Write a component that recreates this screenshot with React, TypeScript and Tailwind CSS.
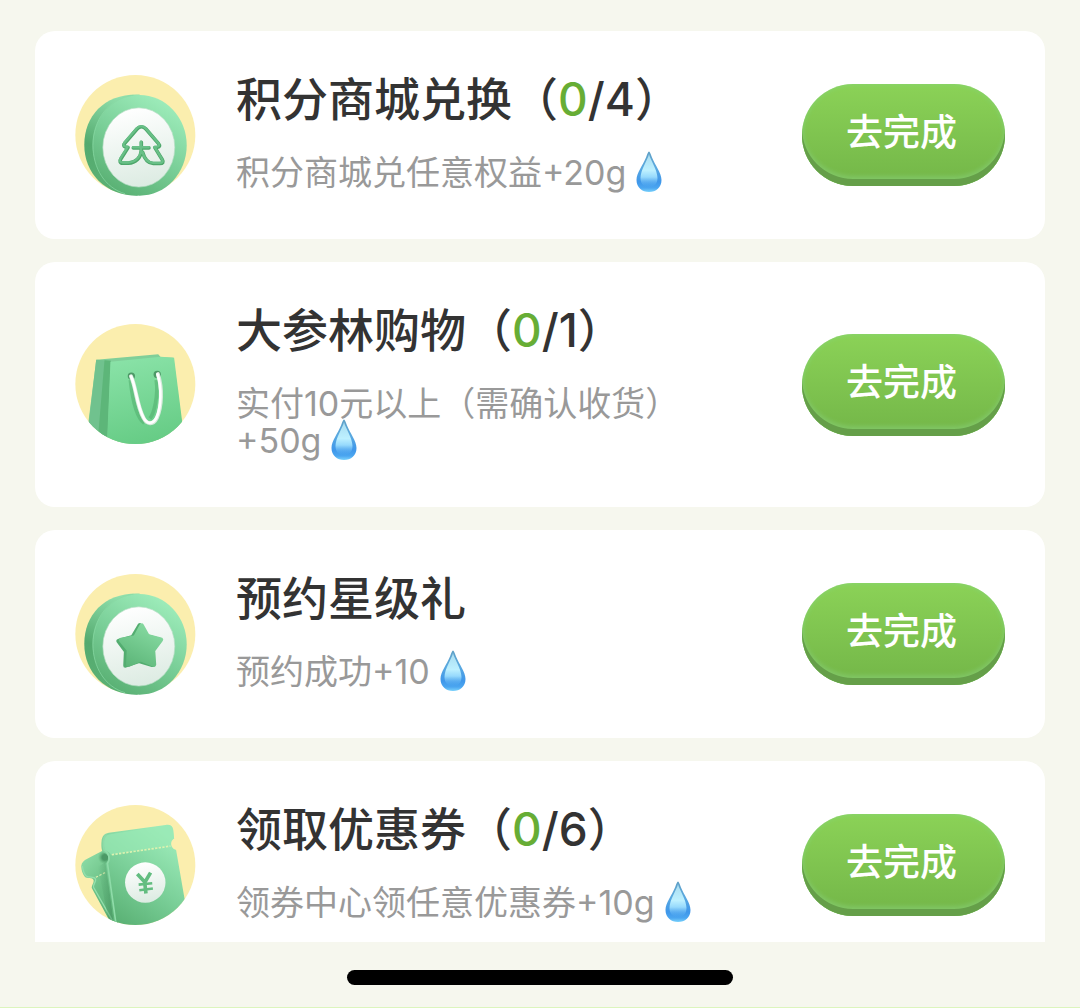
import type { ReactNode } from 'react'

type Task = {
  id: string
  title: string
  total?: number
  desc: string
  reward: string
  icon: ReactNode
}

function Drop() {
  return (
    <svg viewBox="0 0 26 42" className="inline-block w-[26px] h-[42px] ml-[10px] -mt-4 -mb-2 align-middle" aria-hidden="true">
      <defs>
        <linearGradient id="dropBody" x1="0" y1="0" x2="0" y2="1">
          <stop offset="0" stopColor="#5f9fc4" />
          <stop offset="0.4" stopColor="#5aa9e0" />
          <stop offset="0.75" stopColor="#3f97ea" />
          <stop offset="0.9" stopColor="#4ba6f0" />
          <stop offset="1" stopColor="#7ad2fc" />
        </linearGradient>
        <linearGradient id="dropShine" x1="0" y1="0" x2="0" y2="1">
          <stop offset="0" stopColor="#a9dcf0" />
          <stop offset="0.5" stopColor="#bdf0ff" />
          <stop offset="0.7" stopColor="#9fe0ff" stopOpacity="0.9" />
          <stop offset="1" stopColor="#5db4f3" stopOpacity="0" />
        </linearGradient>
      </defs>
      <path d="M13 0.5C14 0.5 14.6 3 16 6.5C19 14 25.5 22 25.5 29C25.5 36.5 20 41 13 41S0.5 36.5 0.5 29C0.5 22 7 14 10 6.5C11.4 3 12 0.5 13 0.5Z" fill="url(#dropBody)" />
      <path d="M13 3C14 8 21.5 19 21.5 27C21.5 33 18 36 13 36S4.5 33 4.5 27C4.5 19 12 8 13 3Z" fill="url(#dropShine)" />
    </svg>
  )
}

function IconFrame({ id, children }: { id: string; children: ReactNode }) {
  return (
    <svg viewBox="30 29 363 365" className="w-[121px] h-[121px] shrink-0" aria-hidden="true">
      <defs>
        <linearGradient id={`${id}Face`} x1="0.8" y1="0.1" x2="0.3" y2="1">
          <stop offset="0" stopColor="#9cebb9" />
          <stop offset="0.5" stopColor="#7acf98" />
          <stop offset="1" stopColor="#59b073" />
        </linearGradient>
        <linearGradient id={`${id}Side`} x1="0.5" y1="0" x2="0.3" y2="1">
          <stop offset="0" stopColor="#8fdfac" />
          <stop offset="0.55" stopColor="#54aa6e" />
          <stop offset="1" stopColor="#5bb276" />
        </linearGradient>
        <linearGradient id={`${id}White`} x1="0.4" y1="0" x2="0.6" y2="1">
          <stop offset="0" stopColor="#ffffff" />
          <stop offset="1" stopColor="#dcebe2" />
        </linearGradient>
        <clipPath id={`${id}Clip`}>
          <circle cx="211" cy="210" r="181" />
        </clipPath>
      </defs>
      <circle cx="211" cy="210" r="181" fill="#fbeeae" />
      {children}
    </svg>
  )
}

function Coin({ id, children }: { id: string; children: ReactNode }) {
  return (
    <IconFrame id={id}>
      <path d="M224 88C120 84 57 150 57 240C57 325 120 393 218 393Z" fill={`url(#${id}Side)`} />
      <ellipse cx="224" cy="241" rx="142" ry="152" fill={`url(#${id}Face)`} />
      <path d="M205 90C130 100 83 165 83 241C83 310 120 370 180 387" fill="none" stroke="#8adba6" strokeWidth="3" opacity="0.7" />
      <ellipse cx="221.5" cy="247.5" rx="108.5" ry="119.5" fill={`url(#${id}White)`} stroke="#b7dec5" strokeWidth="2" />
      {children}
    </IconFrame>
  )
}

const treeOutline =
  'M229 232V258C228 278 212 294 190 295H174C164 295 163 289 168 281L189 248L181 246C175 244 175 240 179 235L216 192C224 183 235 183 243 192L281 236C286 242 284 246 278 247L270 248L292 284C297 292 294 296 285 296H265C250 295 240 287 233 262'

function TreeIcon() {
  return (
    <Coin id="tree">
      <g fill="none" strokeLinecap="round" strokeLinejoin="round">
        <g stroke="#4da66a" strokeWidth="11">
          <path d={treeOutline} />
          <path d="M205 249H252" />
        </g>
        <g stroke="#68c087" strokeWidth="7" transform="translate(-1 -2)">
          <path d={treeOutline} />
          <path d="M205 249H252" />
        </g>
      </g>
    </Coin>
  )
}

function StarIcon() {
  return (
    <Coin id="star">
      <defs>
        <linearGradient id="starFill" gradientUnits="userSpaceOnUse" x1="260" y1="190" x2="200" y2="310">
          <stop offset="0" stopColor="#85d9a0" />
          <stop offset="1" stopColor="#5db679" />
        </linearGradient>
      </defs>
      <path d="M224 184L203 219L160 231L183 262L181 305L222 291L262 303L260 260L286 228L244 216Z" fill="#53ad70" stroke="#53ad70" strokeWidth="13" strokeLinejoin="round" />
      <path d="M230 185L211 221L168 228L192 258L190 302L227 286L267 302L264 259L288 227L248 217Z" fill="url(#starFill)" stroke="url(#starFill)" strokeWidth="14" strokeLinejoin="round" />
    </Coin>
  )
}

function BagIcon() {
  return (
    <IconFrame id="bag">
      <defs>
        <linearGradient id="bagFront" x1="0.3" y1="0" x2="0.5" y2="1">
          <stop offset="0" stopColor="#89e2a7" />
          <stop offset="1" stopColor="#65cb84" />
        </linearGradient>
      </defs>
      <g clipPath="url(#bagClip)">
        <path d="M93 137L280 120L288 129L326 131L360 400H60Z" fill="#80cf99" />
        <path d="M93 137L136 140L118 400H62Z" fill="#70c28e" />
        <path d="M118 138L137 140L126 400H96Z" fill="#5db679" />
        <path d="M136 143L288 128L328 131L352 322L345 400H125Z" fill="url(#bagFront)" />
        <circle cx="199" cy="186" r="11" fill="#4d9967" />
        <circle cx="277" cy="181" r="11" fill="#4d9967" />
        <path d="M196 198C202 255 212 310 238 328M274 198C281 245 267 300 255 314" fill="none" stroke="#54b170" strokeWidth="11" opacity="0.6" />
        <path d="M198 187C213 218 215 275 236 313C246 331 264 336 276 312C291 278 293 222 279 180" fill="none" stroke="#d7e9dc" strokeWidth="12" strokeLinecap="round" />
        <path d="M198 187C213 218 215 275 236 312C246 330 262 334 275 311C289 278 291 222 278 181" fill="none" stroke="#fff" strokeWidth="8" strokeLinecap="round" />
      </g>
    </IconFrame>
  )
}

function TicketIcon() {
  return (
    <IconFrame id="ticket">
      <defs>
        <linearGradient id="ticketBack" x1="0.2" y1="0" x2="0.7" y2="1">
          <stop offset="0" stopColor="#8cdca6" />
          <stop offset="0.5" stopColor="#6abf85" />
          <stop offset="1" stopColor="#58ac72" />
        </linearGradient>
        <linearGradient id="ticketShade" x1="0" y1="0" x2="1" y2="0">
          <stop offset="0" stopColor="#4b9966" stopOpacity="0" />
          <stop offset="1" stopColor="#43905d" />
        </linearGradient>
        <radialGradient id="ticketNotch">
          <stop offset="0.4" stopColor="#4b9966" />
          <stop offset="1" stopColor="#5fb47a" stopOpacity="0" />
        </radialGradient>
      </defs>
      <g clipPath="url(#ticketClip)">
        <path d="M66 191L112 167L150 190L160 410L132 376L80 280C77 274 87 264 85 256C82 246 66 254 58 245C52 238 47 222 48 212C49 203 56 196 66 191Z" fill="url(#ticketBack)" />
        <path d="M51 213C53 226 57 238 63 243C72 250 86 242 91 252C94 260 82 269 85 277L142 378" fill="none" stroke="#93dfac" strokeWidth="4" />
        <path d="M92 247L124 231" stroke="#dcefb0" strokeWidth="4" strokeDasharray="7 5" />
        <path d="M98 215L124 200L146 395L128 366Z" fill="url(#ticketShade)" opacity="0.6" />
        <circle cx="119" cy="187" r="21" fill="url(#ticketNotch)" />
        <path d="M131 113L302 89C316 86 323 92 325 103L328 130C318 136 315 150 326 161L334 165L360 315L350 410H150L121 205C136 196 134 178 115 172C108 168 108 148 109 140C110 124 117 116 131 113Z" fill="url(#ticketFace)" />
        <path d="M135 117L302 91C316 88 323 92 325 103L328 130C317 135 315 143 319 151L137 179C134 171 123 168 118 164C113 130 118 120 135 117Z" fill="#9ae9b5" opacity="0.65" />
        <path d="M124 118C114 126 112 148 117 165C132 173 136 192 127 205L153 390" fill="none" stroke="#8edba8" strokeWidth="5" />
        <path d="M140 179L317 153" stroke="#dcf2b0" strokeWidth="5" strokeDasharray="7 4" />
        <circle cx="241" cy="263" r="61" fill="url(#ticketWhite)" />
        <g fill="none" stroke="#63bd80" strokeWidth="11">
          <path d="M217 237L240 262L257 233M239 260L243 296" />
          <path d="M221 269L262 265M223 286L264 281" strokeWidth="8" />
        </g>
      </g>
    </IconFrame>
  )
}

const tasks: Task[] = [
  { id: 'mall', title: '积分商城兑换', total: 4, desc: '积分商城兑任意权益', reward: '+20g', icon: <TreeIcon /> },
  { id: 'shop', title: '大参林购物', total: 1, desc: '实付10元以上（需确认收货）', reward: '+50g', icon: <BagIcon /> },
  { id: 'gift', title: '预约星级礼', desc: '预约成功', reward: '+10', icon: <StarIcon /> },
  { id: 'coupon', title: '领取优惠券', total: 6, desc: '领券中心领任意优惠券', reward: '+10g', icon: <TicketIcon /> },
]

function TaskCard({ task }: { task: Task }) {
  return (
    <li className="flex items-center shrink-0 gap-10 px-10 bg-white rounded-[20px]">
      {task.icon}
      <div className="flex-1 min-w-0 pt-10 pb-12">
        <h2 className="text-[46px] leading-[56px] font-medium text-[#333333]">
          {task.title}
          {task.total && (
            <>
              （<span className="text-[#67ad35]">0</span>/{task.total}）
            </>
          )}
        </h2>
        <p className="mt-[27px] pr-10 text-[34px] leading-[37px] text-[#999999]">
          {task.desc}
          <span className="whitespace-nowrap">
            {task.reward}
            <Drop />
          </span>
        </p>
      </div>
      <button
        type="button"
        className="shrink-0 w-[203px] h-[102px] pb-1 pr-1 rounded-[51px] bg-linear-to-b from-[#8bd257] to-[#73b648] shadow-[inset_0_-7px_0_#659f49,inset_0_-10px_4px_#80c665,inset_0_0_5px_#86d477] text-[37px] font-medium text-white"
      >
        去完成
      </button>
    </li>
  )
}

export default function App() {
  return (
    <div className="flex flex-col h-screen bg-[#f6f7ee] border-b border-[#dcf5bd] font-[Inter,'Noto_Sans_CJK_SC',sans-serif]">
      <main className="flex-1 min-h-0 overflow-hidden px-[35px] pt-[31px]">
        <ul className="flex flex-col gap-[23px]">
          {tasks.map(task => (
            <TaskCard key={task.id} task={task} />
          ))}
        </ul>
      </main>
      <footer className="flex justify-center shrink-0 h-[65px] pt-7">
        <div className="w-[386px] h-[15px] rounded-full bg-black" />
      </footer>
    </div>
  )
}
